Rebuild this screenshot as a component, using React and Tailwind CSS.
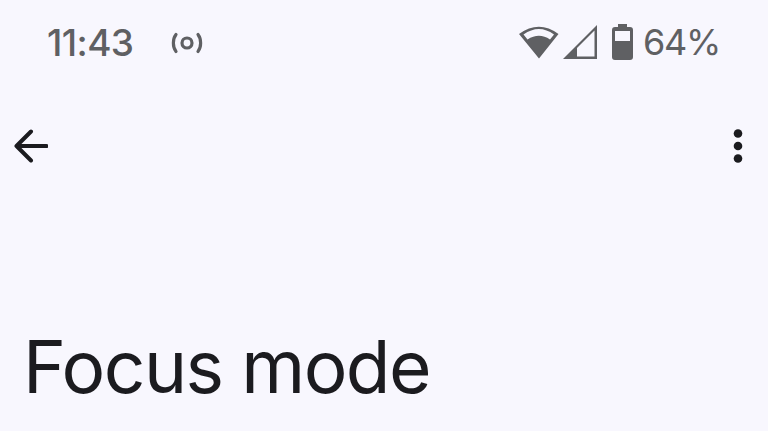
export default function App() {
  return (
    <div className="w-[768px] h-[431px] overflow-hidden bg-[#f8f7fe] flex flex-col font-['Inter','Liberation_Sans',sans-serif]">
      <div className="h-[84px] flex items-center pl-[47px] text-[#5f6063]">
        <span className="text-[37px] leading-none font-medium tracking-[-0.6px] w-[124px]">11:43</span>
        <svg width="32" height="24" viewBox="0 0 32 24" fill="none" stroke="currentColor" strokeWidth="3.2" strokeLinecap="round" className="mt-[2px]">
          <circle cx="16" cy="12" r="5" />
          <path d="M5 3.5 C1.500 8 1.500 16 5 20.500" />
          <path d="M27 3.5 C30.500 8 30.500 16 27 20.500" />
        </svg>
        <svg width="40" height="34" viewBox="0 0 40 34" className="ml-[316px] mr-[4px]">
          <path d="M20 33.500 L0 9 Q20 -5.500 39.500 9 Z M4.500 9.500 L8.500 14.500 Q20 7 31 14.500 L35 9.500 Q20 -1.500 4.500 9.500 Z" fill="currentColor" fillRule="evenodd" />
        </svg>
        <svg width="34" height="34" viewBox="0 0 34 34" className="mr-[15px]">
          <path d="M0 34 L34 0 V34 Z M14 23 L31.500 5.500 V31.500 H14 Z" fill="currentColor" fillRule="evenodd" />
        </svg>
        <svg width="21" height="36" viewBox="0 0 21 36" className="mr-[10px]">
          <path d="M6 0 H15 V3 H18 Q21 3 21 6 V33 Q21 36 18 36 H3 Q0 36 0 33 V6 Q0 3 3 3 H6 Z M3 7 V17 H18 V7 Z" fill="currentColor" fillRule="evenodd" />
        </svg>
        <span className="text-[36px] leading-none tracking-[-1.3px]">64%</span>
      </div>
      <div className="h-[124px] flex items-center justify-between pl-[14px] pr-[25px] text-[#1b1b1f]">
        <svg width="34" height="34" viewBox="0 0 34 34" fill="none" stroke="currentColor" strokeWidth="4" strokeLinecap="round" strokeLinejoin="round">
          <path d="M32.500 17 H2.500 M17 2.500 L2.500 17 L17 31.500" />
        </svg>
        <svg width="10" height="34" viewBox="0 0 10 34" fill="currentColor">
          <circle cx="5" cy="4.500" r="4.300" />
          <circle cx="5" cy="17" r="4.300" />
          <circle cx="5" cy="29.500" r="4.300" />
        </svg>
      </div>
      <h1 className="mt-[122px] ml-[23px] text-[73px] leading-none font-normal tracking-[-1.6px] text-[#1b1b1f] whitespace-nowrap">Focus mode</h1>
    </div>
  );
}
